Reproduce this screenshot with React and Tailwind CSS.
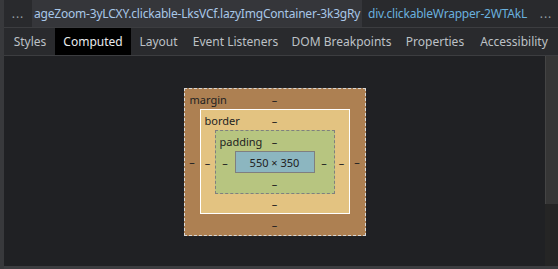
const tabs = [
    { name: 'Styles', w: 'w-[50px]' },
    { name: 'Computed', w: 'w-[76px]', active: true },
    { name: 'Layout', w: 'w-[55px]' },
    { name: 'Event Listeners', w: 'w-[99px]' },
    { name: 'DOM Breakpoints', w: 'w-[113px]' },
    { name: 'Properties', w: 'w-[74px]' },
    { name: 'Accessibility', w: 'w-[84px]' },
];

const Dash = ({ className = '' }) => (
    <div className={`flex items-center justify-center leading-none ${className}`}>–</div>
);

function BoxModel() {
    return (
        <div className="relative grid h-[148px] w-[182px] grid-cols-[15px_150px_15px] grid-rows-[20px_105px_21px] border border-dashed border-[#d8d8d8] bg-[#ad8052]">
            <span className="absolute left-[5px] top-[5px] leading-none">margin</span>
            <div />
            <Dash />
            <div />
            <Dash />
            <div className="relative grid grid-cols-[14px_120px_14px] grid-rows-[20px_64px_19px] border border-white bg-[#e3c381]">
                <span className="absolute left-[4px] top-[5px] leading-none">border</span>
                <div />
                <Dash />
                <div />
                <Dash />
                <div className="relative grid grid-cols-[19px_80px_19px] grid-rows-[20px_22px_20px] border border-dashed border-[#7f7f7f] bg-[#b7c580]">
                    <span className="absolute left-[4px] top-[5px] leading-none">padding</span>
                    <div />
                    <Dash />
                    <div />
                    <Dash />
                    <div className="flex items-center justify-center border border-[#7f7f7f] bg-[#8cb6c0] leading-none">
                        550 × 350
                    </div>
                    <Dash />
                    <div />
                    <Dash />
                    <div />
                </div>
                <Dash />
                <div />
                <Dash />
                <div />
            </div>
            <Dash />
            <div />
            <Dash />
            <div />
        </div>
    );
}

export default function App() {
    return (
        <div
            className="flex h-[269px] w-[558px] flex-col overflow-hidden border-l-[4px] border-[#38393c] bg-[#202124] text-[12px]"
            style={{ fontFamily: '"Noto Sans", "Open Sans", sans-serif' }}
        >
            <div className="flex h-[28px] shrink-0 items-stretch border-b border-[#3c3d40] bg-[#292a2d] whitespace-nowrap text-[12px] tracking-[-0.2px]">
                <div className="flex w-[28px] shrink-0 items-center justify-center tracking-[1px] text-[#9aa0a6]">...</div>
                <div className="flex w-[330px] shrink-0 items-center overflow-hidden bg-[#35363a] pl-[2px] text-[#a8c7e8]">
                    ageZoom-3yLCXY.clickable-LksVCf.lazyImgContainer-3k3gRy
                </div>
                <div className="flex w-[172px] shrink-0 items-center pl-[6px] text-[#6ab0de]">
                    div.clickableWrapper-2WTAkL
                </div>
                <div className="flex flex-1 items-center justify-center tracking-[1px] text-[#9aa0a6]">...</div>
            </div>

            <div className="flex h-[28px] shrink-0 items-stretch border-b border-[#3c3d40] bg-[#292a2d] pl-[1px] whitespace-nowrap">
                {tabs.map((tab) => (
                    <div
                        key={tab.name}
                        className={`flex shrink-0 items-center justify-center ${tab.w} ${
                            tab.active ? 'bg-black text-[#e8eaed]' : 'text-[#bdc1c6]'
                        }`}
                    >
                        {tab.name}
                    </div>
                ))}
            </div>

            <div className="flex min-h-0 flex-1">
                <div className="flex flex-1 justify-center pt-[32px] text-[11px] text-[#222]">
                    <BoxModel />
                </div>
                <div className="flex w-[13px] flex-col bg-[#252525]">
                    <div className="h-[148px] border-l border-[#444] bg-[#363636]" />
                </div>
            </div>

            <div className="h-[3px] shrink-0 bg-[#3c3d40]" />
        </div>
    );
}
